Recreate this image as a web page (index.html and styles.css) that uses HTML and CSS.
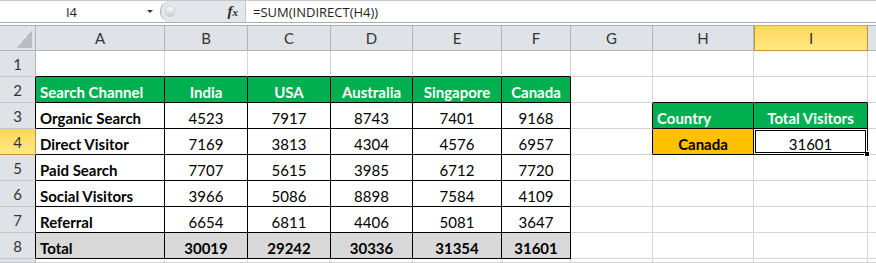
FILE: index.html
```html
<!DOCTYPE html>
<html lang="en">
<head>
  <meta charset="UTF-8">
  <meta name="viewport" content="width=device-width, initial-scale=1.0">
  <title>INDIRECT Sum</title>
  <link rel="stylesheet" href="styles.css">
</head>
<body>
  <!-- Formula bar -->
  <div class="formula-bar">
    <div class="name-box">
      <span class="name-text">I4</span>
      <span class="name-arrow"></span>
    </div>
    <div class="fx-area">
      <span class="splitter"></span>
      <span class="fx"><i>f</i><i class="fx-x">x</i></span>
    </div>
    <div class="formula">=SUM(INDIRECT(H4))</div>
  </div>

  <!-- Worksheet -->
  <div class="sheet" id="sheet"></div>

  <script>
    const columns = ['A', 'B', 'C', 'D', 'E', 'F', 'G', 'H', 'I', ''];

    const tableRows = {
      2: ['Search Channel', 'India', 'USA', 'Australia', 'Singapore', 'Canada'],
      3: ['Organic Search', 4523, 7917, 8743, 7401, 9168],
      4: ['Direct Visitor', 7169, 3813, 4304, 4576, 6957],
      5: ['Paid Search', 7707, 5615, 3985, 6712, 7720],
      6: ['Social Visitors', 3966, 5086, 8898, 7584, 4109],
      7: ['Referral', 6654, 6811, 4406, 5081, 3647],
      8: ['Total', 30019, 29242, 30336, 31354, 31601]
    };

    const lookupRows = {
      3: ['Country', 'Total Visitors'],
      4: ['Canada', '31601']
    };

    const sheet = document.getElementById('sheet');
    let html = '<div class="head corner"><span class="corner-mark"></span></div>';

    columns.forEach((name, c) => {
      const sel = name === 'I' ? ' selected' : '';
      html += `<div class="head${sel}">${name}</div>`;
    });

    // row 9 only peeks in at the bottom edge, so it gets no number
    for (let r = 1; r <= 9; r++) {
      const rowSel = r === 4 ? ' selected' : '';
      const rowEdge = r >= 2 && r <= 8 ? ' edge-right' : '';
      const label = r < 9 ? r : '';
      html += `<div class="row-head${rowSel}${rowEdge}">${label}</div>`;

      columns.forEach((name, c) => {
        let classes = ['cell'];
        let text = '';

        if (tableRows[r] && c <= 5) {
          classes.push('boxed');
          text = tableRows[r][c];
          if (r === 2) classes.push('green');
          if (r === 8) classes.push('total');
          classes.push(c === 0 ? 'bold' : 'center');
        } else if (r === 1 && c <= 5) {
          classes.push('edge-bottom');
        }

        if (lookupRows[r] && (c === 7 || c === 8)) {
          classes.push('boxed');
          text = lookupRows[r][c - 7];
          if (r === 3) classes.push('green');
          if (r === 3 && c === 8) classes.push('center');
          if (r === 4 && c === 7) classes.push('orange', 'bold', 'center');
          if (r === 4 && c === 8) classes.push('center', 'active');
        } else if (r === 2 && (c === 7 || c === 8)) {
          classes.push('edge-bottom');
        } else if ((r === 3 || r === 4) && c === 6) {
          classes.push('edge-right');
        }

        html += `<div class="${classes.join(' ')}">${text}</div>`;
      });
    }

    sheet.innerHTML = html;
  </script>
</body>
</html>
```

FILE: styles.css
```css
body {
  margin: 0;
  padding: 0;
  background-color: #ffffff;
  font-family: Lato, "Liberation Sans", sans-serif;
  color: #000000;
  height: 263px;
  overflow: hidden;
}

/* Formula bar */
.formula-bar {
  display: flex;
  height: 23px;
  box-sizing: border-box;
  border-top: 1px solid #c6c8cc;
  border-bottom: 1px solid #a9acb1;
  margin-bottom: 2px;
  font-family: "Open Sans", sans-serif;
  font-size: 13px;
  color: #1e1e1e;
}

.name-box {
  width: 160px;
  display: flex;
  align-items: center;
}

.name-text {
  flex: 1;
  text-align: center;
  padding-right: 4px;
}

.name-arrow {
  width: 0;
  height: 0;
  border-left: 3px solid transparent;
  border-right: 3px solid transparent;
  border-top: 3px solid #333333;
  margin-right: 7px;
}

.fx-area {
  width: 85px;
  display: flex;
  align-items: center;
  justify-content: space-between;
  background-color: #e3e6ea;
  border-left: 1px solid #a9acb1;
  border-radius: 10px 0 0 10px;
  padding: 0 7px 0 4px;
  box-sizing: border-box;
}

.splitter {
  width: 8px;
  height: 9px;
  border-radius: 50%;
  background: linear-gradient(#ffffff, #c9ccd1);
  border: 1px solid #d0d3d7;
}

.fx {
  font-family: "Liberation Serif", serif;
  font-weight: bold;
  font-size: 15px;
  color: #2b2b2b;
}

.fx-x {
  font-size: 11px;
}

.formula {
  flex: 1;
  display: flex;
  align-items: center;
  border-left: 1px solid #c6c8cc;
  padding-left: 7px;
}

/* Worksheet grid */
.sheet {
  display: grid;
  grid-template-columns: 36px 129px 83px 83px 82px 89px 69px 82px 101px 114px 1fr;
  grid-template-rows: 25px repeat(8, 26px) 4px;
  border-top: 1px solid #a9acb1;
}

.head,
.row-head {
  box-sizing: border-box;
  display: flex;
  align-items: center;
  justify-content: center;
  background-color: #dfe3e8;
  border-right: 1px solid #b1b6bc;
  border-bottom: 1px solid #b1b6bc;
  font-size: 15px;
  color: #333333;
}

.row-head {
  border-bottom-color: #c3c7cc;
}

.head.selected,
.row-head.selected {
  background: linear-gradient(#ffd55a, #ffea84);
  border: 1px solid #c4923d;
  border-top: none;
}

.row-head.selected {
  border-left: none;
}

.corner {
  justify-content: flex-end;
  align-items: flex-end;
}

.corner-mark {
  width: 15px;
  height: 18px;
  margin: 0 3px 2px 0;
  background: linear-gradient(to bottom right, transparent 50%, #b9bdc3 50%);
}

.cell {
  box-sizing: border-box;
  display: flex;
  align-items: flex-end;
  padding: 0 4px 1px;
  border-right: 1px solid #d4d4d4;
  border-bottom: 1px solid #d4d4d4;
  font-size: 15px;
  white-space: nowrap;
  overflow: hidden;
}

.cell.center {
  justify-content: center;
}

.cell.bold {
  font-weight: bold;
}

.cell.boxed {
  border-right-color: #000000;
  border-bottom-color: #000000;
}

.edge-bottom {
  border-bottom-color: #000000;
}

.edge-right {
  border-right-color: #000000;
}

.cell.green {
  background-color: #00b050;
  color: #ffffff;
  font-weight: bold;
}

.cell.total {
  background-color: #d9d9d9;
  font-weight: bold;
}

.cell.orange {
  background-color: #ffc000;
}

/* Active cell selection */
.cell.active {
  position: relative;
  overflow: visible;
  z-index: 1;
}

.cell.active::after {
  content: "";
  position: absolute;
  top: 1px;
  left: 1px;
  right: 1px;
  bottom: 1px;
  border: 1px solid #000000;
}

.cell.active::before {
  content: "";
  position: absolute;
  right: -3px;
  bottom: -3px;
  width: 4px;
  height: 4px;
  background-color: #000000;
  border: 1px solid #ffffff;
}
```
